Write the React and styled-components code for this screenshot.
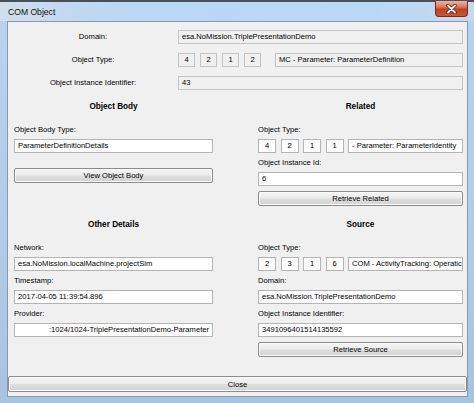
import React from "react";
import styled, { createGlobalStyle } from "styled-components";

const GlobalStyle = createGlobalStyle`
  html, body {
    margin: 0;
    padding: 0;
    background: #5d6873;
  }
  body {
    font-family: "Liberation Sans", Arial, sans-serif;
    color: #000;
  }
`;

const Window = styled.div`
  width: 474px;
  height: 403px;
  box-sizing: border-box;
  display: flex;
  flex-direction: column;
  padding: 0 6px 6px 7px;
  border-top: 2px solid #47515b;
  background: linear-gradient(180deg, #b9d3ef 0%, #b2cbe7 60%, #a9c2de 100%);
`;

const TitleBar = styled.div`
  height: 19px;
  margin: 0 -6px 0 -7px;
  padding-left: 8px;
  display: flex;
  align-items: center;
  background: linear-gradient(
    90deg,
    #d3dfeb 0%,
    #bfd7f1 18%,
    #b8d7f8 45%,
    #bad8f6 80%,
    #c6d9ec 100%
  );
`;

const Title = styled.span`
  font-size: 8.6px;
  color: #111;
`;

const CloseX = styled.div`
  align-self: flex-start;
  margin: -1px 6px 0 auto;
  width: 33px;
  height: 16px;
  box-sizing: border-box;
  display: flex;
  align-items: center;
  justify-content: center;
  border: 1px solid #7a2a18;
  border-top: none;
  border-radius: 0 0 4px 4px;
  background: linear-gradient(
    180deg,
    #eab3a4 0%,
    #d9775e 40%,
    #c3401f 55%,
    #cd5434 100%
  );
`;

const Client = styled.div`
  flex: 1;
  min-width: 0;
  display: flex;
  flex-direction: column;
  padding: 8px 4px 4px 6px;
  border: 1px solid #8599b3;
  background: #f0f0f0;
  font-size: 7.6px;
`;

const HeaderGrid = styled.div`
  display: grid;
  grid-template-columns: 158px minmax(0, 1fr);
  column-gap: 6px;
  row-gap: 9px;
`;

const HeaderLabel = styled.div`
  height: 14px;
  line-height: 14px;
  text-align: center;
`;

const Field = styled.div`
  height: 14px;
  box-sizing: border-box;
  flex: ${(p) => (p.$fill ? 1 : "none")};
  min-width: 0;
  padding: 0 3px;
  line-height: 12px;
  white-space: nowrap;
  overflow: hidden;
  text-align: ${(p) => p.$align || "left"};
  border: 1px solid ${(p) => (p.$readOnly ? "#c3c3c3" : "#b4b4b4")};
  background: ${(p) => (p.$readOnly ? "#f0f0f0" : "#ffffff")};
`;

const NumBox = styled(Field)`
  width: ${(p) => p.$w}px;
  padding: 0;
  text-align: center;
`;

const TypeRow = styled.div`
  display: flex;
  min-width: 0;
  gap: ${(p) => p.$gap}px;
`;

const TypeText = styled(Field)`
  margin-left: ${(p) => p.$extra}px;
`;

const Body = styled.div`
  margin-top: 11px;
  display: grid;
  grid-template-columns: 199px minmax(0, 1fr);
  column-gap: 45px;
  row-gap: 13px;
  align-items: start;
`;

const Section = styled.div`
  min-width: 0;
  display: flex;
  flex-direction: column;
  gap: 4px;
`;

const SectionTitle = styled.div`
  margin-bottom: 7px;
  line-height: 12px;
  font-size: 8.2px;
  font-weight: bold;
  text-align: center;
`;

const Group = styled.div`
  display: flex;
  flex-direction: column;
  gap: 3px;
`;

const FieldLabel = styled.div`
  line-height: 12px;
`;

const Button = styled.div`
  height: ${(p) => p.$h || 15}px;
  margin-top: ${(p) => p.$top || 0}px;
  box-sizing: border-box;
  display: flex;
  align-items: center;
  justify-content: center;
  border: 1px solid #8c8c8c;
  border-radius: 2px;
  box-shadow: inset 0 0 0 1px #fbfbfb;
  background: linear-gradient(
    180deg,
    #f4f4f4 0%,
    #ececec 48%,
    #dedede 52%,
    #d3d3d3 100%
  );
`;

const Footer = styled.div`
  margin: auto -4px 0 -6px;
`;

function TypeFields({ ids, text, boxWidth, gap, extra, readOnly }) {
  return (
    <TypeRow $gap={gap}>
      {ids.map((id, i) => (
        <NumBox key={i} $w={boxWidth} $readOnly={readOnly}>
          {id}
        </NumBox>
      ))}
      <TypeText $fill $extra={extra} $readOnly={readOnly}>
        {text}
      </TypeText>
    </TypeRow>
  );
}

function Labeled({ label, children }) {
  return (
    <Group>
      <FieldLabel>{label}</FieldLabel>
      {children}
    </Group>
  );
}

export default function App() {
  return (
    <>
      <GlobalStyle />
      <Window>
        <TitleBar>
          <Title>COM Object</Title>
          <CloseX>
            <svg width="11" height="10" viewBox="0 0 11 10">
              <path
                d="M2 1.5 L9 8.5 M9 1.5 L2 8.5"
                stroke="#5a1d10"
                strokeWidth="3.4"
                strokeLinecap="round"
              />
              <path
                d="M2 1.5 L9 8.5 M9 1.5 L2 8.5"
                stroke="#ffffff"
                strokeWidth="1.8"
                strokeLinecap="round"
              />
            </svg>
          </CloseX>
        </TitleBar>

        <Client>
          <HeaderGrid>
            <HeaderLabel>Domain:</HeaderLabel>
            <Field $readOnly>esa.NoMission.TriplePresentationDemo</Field>

            <HeaderLabel>Object Type:</HeaderLabel>
            <TypeFields
              readOnly
              ids={[4, 2, 1, 2]}
              text="MC - Parameter: ParameterDefinition"
              boxWidth={17}
              gap={5}
              extra={9}
            />

            <HeaderLabel>Object Instance Identifier:</HeaderLabel>
            <Field $readOnly>43</Field>
          </HeaderGrid>

          <Body>
            <Section>
              <SectionTitle>Object Body</SectionTitle>
              <Labeled label="Object Body Type:">
                <Field>ParameterDefinitionDetails</Field>
              </Labeled>
              <Button $top={11}>View Object Body</Button>
            </Section>

            <Section>
              <SectionTitle>Related</SectionTitle>
              <Labeled label="Object Type:">
                <TypeFields
                  ids={[4, 2, 1, 1]}
                  text="- Parameter: ParameterIdentity"
                  boxWidth={18}
                  gap={4.5}
                  extra={0}
                />
              </Labeled>
              <Labeled label="Object Instance Id:">
                <Field>6</Field>
              </Labeled>
              <Button $top={1}>Retrieve Related</Button>
            </Section>

            <Section>
              <SectionTitle>Other Details</SectionTitle>
              <Labeled label="Network:">
                <Field>esa.NoMission.localMachine.projectSim</Field>
              </Labeled>
              <Labeled label="Timestamp:">
                <Field>2017-04-05 11:39:54.896</Field>
              </Labeled>
              <Labeled label="Provider:">
                <Field $align="right">
                  :1024/1024-TriplePresentationDemo-Parameter
                </Field>
              </Labeled>
            </Section>

            <Section>
              <SectionTitle>Source</SectionTitle>
              <Labeled label="Object Type:">
                <TypeFields
                  ids={[2, 3, 1, 6]}
                  text="COM - ActivityTracking: Operatic"
                  boxWidth={18}
                  gap={4.5}
                  extra={0}
                />
              </Labeled>
              <Labeled label="Domain:">
                <Field>esa.NoMission.TriplePresentationDemo</Field>
              </Labeled>
              <Labeled label="Object Instance Identifier:">
                <Field>3491096401514135592</Field>
              </Labeled>
              <Button $top={1}>Retrieve Source</Button>
            </Section>
          </Body>

          <Footer>
            <Button $h={16}>Close</Button>
          </Footer>
        </Client>
      </Window>
    </>
  );
}
